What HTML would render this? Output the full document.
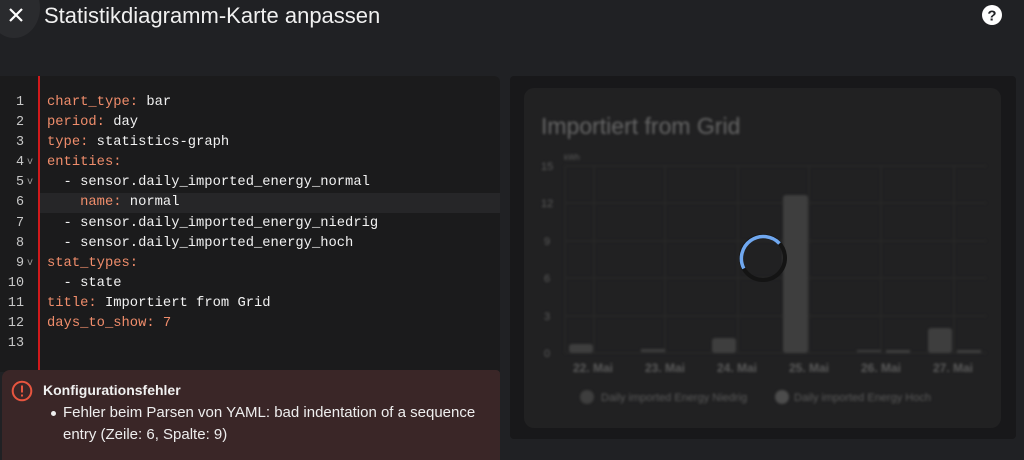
<!DOCTYPE html>
<html><head><meta charset="utf-8"><style>
*{margin:0;padding:0;box-sizing:border-box}
body{width:1024px;height:452px;background:#202124;overflow:hidden;position:relative;font-family:"Liberation Sans",sans-serif;color:#e1e1e1}
.abs{position:absolute}
.mono{font-family:"Liberation Mono",monospace;font-size:13.8px}
.ln{position:absolute;left:0;width:24px;text-align:right;color:#c8c8c8;font-size:13.4px}
.code{position:absolute;left:47px;color:#f2f2f2;white-space:pre}
.k{color:#f08d6b}
.fold{position:absolute;left:27px;color:#999;font-size:10px}
</style></head><body>
<div class="abs" style="left:-12px;top:-22px;width:52px;height:60px;border-radius:50%;background:#2a2b2e"></div>
<svg class="abs" style="left:7px;top:6px" width="18" height="18" viewBox="0 0 18 18"><path d="M3 3L15 15M15 3L3 15" stroke="#fff" stroke-width="2.2"/></svg>
<div class="abs" style="left:44px;top:3px;font-size:22px;color:#f0f0f0">Statistikdiagramm-Karte anpassen</div>
<svg class="abs" style="left:981px;top:4px" width="22" height="22" viewBox="0 0 22 22"><circle cx="11" cy="11" r="10" fill="#fff"/><text x="11" y="16.5" text-anchor="middle" font-family="Liberation Sans" font-weight="bold" font-size="15" fill="#202124">?</text></svg>

<div class="abs" style="left:0;top:76px;width:500px;height:296px;background:#1b1b1c;border-top-right-radius:6px"></div>
<div class="abs" style="left:38px;top:76px;width:2px;height:296px;background:#d0191b"></div>
<div class="abs" style="left:40px;top:193px;width:460px;height:20px;background:#262628"></div>
<div class="abs mono" style="left:0;top:93px;width:500px;line-height:20.1px">
<div style="position:relative;height:20.1px"><span class="ln">1</span><span class="code"><span class="k">chart_type:</span> bar</span></div>
<div style="position:relative;height:20.1px"><span class="ln">2</span><span class="code"><span class="k">period:</span> day</span></div>
<div style="position:relative;height:20.1px"><span class="ln">3</span><span class="code"><span class="k">type:</span> statistics-graph</span></div>
<div style="position:relative;height:20.1px"><span class="ln">4</span><span class="fold">v</span><span class="code"><span class="k">entities:</span></span></div>
<div style="position:relative;height:20.1px"><span class="ln">5</span><span class="fold">v</span><span class="code">  - sensor.daily_imported_energy_normal</span></div>
<div style="position:relative;height:20.1px"><span class="ln">6</span><span class="code">    <span class="k">name:</span> normal</span></div>
<div style="position:relative;height:20.1px"><span class="ln">7</span><span class="code">  - sensor.daily_imported_energy_niedrig</span></div>
<div style="position:relative;height:20.1px"><span class="ln">8</span><span class="code">  - sensor.daily_imported_energy_hoch</span></div>
<div style="position:relative;height:20.1px"><span class="ln">9</span><span class="fold">v</span><span class="code"><span class="k">stat_types:</span></span></div>
<div style="position:relative;height:20.1px"><span class="ln">10</span><span class="code">  - state</span></div>
<div style="position:relative;height:20.1px"><span class="ln">11</span><span class="code"><span class="k">title:</span> Importiert from Grid</span></div>
<div style="position:relative;height:20.1px"><span class="ln">12</span><span class="code"><span class="k">days_to_show: 7</span></span></div>
<div style="position:relative;height:20.1px"><span class="ln">13</span></div>
</div>

<div class="abs" style="left:2px;top:370px;width:498px;height:90px;background:#3a2627;border-top-left-radius:8px;border-top-right-radius:4px"></div>
<svg class="abs" style="left:11px;top:380px" width="22" height="22" viewBox="0 0 22 22"><circle cx="11" cy="11" r="9.3" fill="none" stroke="#e8553f" stroke-width="2"/><rect x="10" y="5.5" width="2" height="7" fill="#e8553f"/><rect x="10" y="14.5" width="2" height="2" fill="#e8553f"/></svg>
<div class="abs" style="left:43px;top:382px;font-size:14px;font-weight:bold;color:#f0f0f0">Konfigurationsfehler</div>
<div class="abs" style="left:51px;top:411px;width:5px;height:5px;border-radius:50%;background:#eee"></div>
<div class="abs" style="left:63px;top:402px;width:430px;font-size:15px;line-height:22px;color:#eee">Fehler beim Parsen von YAML: bad indentation of a sequence entry (Zeile: 6, Spalte: 9)</div>

<div class="abs" style="left:510px;top:76px;width:506px;height:363px;background:#18181a;border-radius:4px"></div>
<div class="abs" style="left:524px;top:88px;width:477px;height:340px;background:#212122;border-radius:10px"></div>
<div class="abs" style="left:524px;top:88px;width:477px;height:340px;filter:blur(1.2px)">
<div class="abs" style="left:17px;top:25px;font-size:23px;color:#666">Importiert from Grid</div>
<svg class="abs" style="left:0;top:0" width="477" height="340">
<g stroke="#2a2a2a" stroke-width="1">
<line x1="41" y1="78" x2="462" y2="78"/><line x1="41" y1="115" x2="462" y2="115"/><line x1="41" y1="153" x2="462" y2="153"/><line x1="41" y1="190" x2="462" y2="190"/><line x1="41" y1="228" x2="462" y2="228"/><line x1="41" y1="265" x2="462" y2="265"/>
<line x1="41" y1="78" x2="41" y2="265"/><line x1="70" y1="78" x2="70" y2="265"/><line x1="141" y1="78" x2="141" y2="265"/><line x1="214" y1="78" x2="214" y2="265"/><line x1="285" y1="78" x2="285" y2="265"/><line x1="357" y1="78" x2="357" y2="265"/><line x1="430" y1="78" x2="430" y2="265"/>
</g>
<g fill="#5a5a5a" font-family="Liberation Sans" font-size="11">
<text x="17" y="82">15</text><text x="17" y="119">12</text><text x="20" y="157">9</text><text x="20" y="194">6</text><text x="20" y="232">3</text><text x="20" y="269">0</text>
<text x="40" y="72" font-size="8">kWh</text>
<g font-weight="bold" font-size="12"><text x="49" y="284">22. Mai</text><text x="121" y="284">23. Mai</text><text x="193" y="284">24. Mai</text><text x="265" y="284">25. Mai</text><text x="337" y="284">26. Mai</text><text x="409" y="284">27. Mai</text></g>
<text x="77" y="313" font-size="11">Daily imported Energy Niedrig</text><text x="270" y="313" font-size="11">Daily imported Energy Hoch</text>
</g>
<g fill="#3e3e3e">
<rect x="45" y="256" width="24" height="9" rx="3"/><rect x="117" y="261" width="24" height="3"/><rect x="188" y="250" width="24" height="15" rx="3"/>
<rect x="259" y="107" width="25" height="158" rx="3"/><rect x="333" y="262" width="24" height="2"/><rect x="362" y="262" width="24" height="3"/><rect x="404" y="240" width="24" height="25" rx="3"/><rect x="433" y="262" width="24" height="3"/>
<circle cx="63" cy="309" r="7"/><circle cx="258" cy="309" r="7" fill="#4c4c4c"/>
</g>
</svg>
</div>
<svg class="abs" style="left:737px;top:232px" width="52" height="52" viewBox="0 0 52 52">
<circle cx="26" cy="26" r="22" fill="none" stroke="#141414" stroke-width="4"/>
<path d="M6.8 36.5A22 22 0 0 1 42.5 11.5" fill="none" stroke="#70a8f0" stroke-width="3.5"/>
</svg>
</body></html>
